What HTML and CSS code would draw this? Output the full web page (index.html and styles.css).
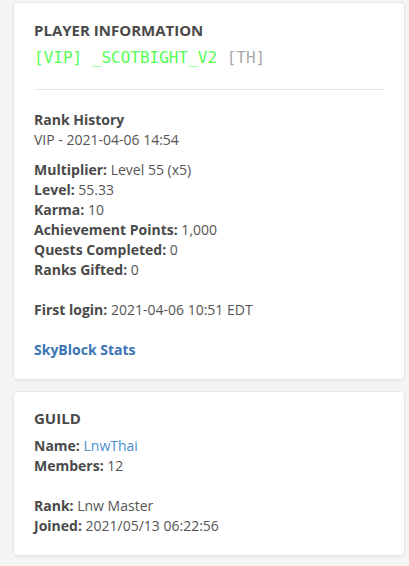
FILE: index.html
```html
<!DOCTYPE html>
<html>
<head>
<meta charset="utf-8">
<link rel="stylesheet" href="styles.css">
</head>
<body>
<div class="page">
  <section class="card card-player">
    <h2 class="card-title">PLAYER INFORMATION</h2>
    <div class="mc-name"><span class="mc-green">[VIP] _SCOTBIGHT_V2</span> <span class="mc-gray">[TH]</span></div>
    <hr class="divider">
    <div class="block">
      <div class="label">Rank History</div>
      <div>VIP - 2021-04-06 14:54</div>
    </div>
    <div class="block">
      <div><b>Multiplier:</b> Level 55 (x5)</div>
      <div><b>Level:</b> 55.33</div>
      <div><b>Karma:</b> 10</div>
      <div><b>Achievement Points:</b> 1,000</div>
      <div><b>Quests Completed:</b> 0</div>
      <div><b>Ranks Gifted:</b> 0</div>
    </div>
    <div class="block gap-lg">
      <div><b>First login:</b> 2021-04-06 10:51 EDT</div>
    </div>
    <div class="block gap-lg">
      <a class="link-strong" href="#">SkyBlock Stats</a>
    </div>
  </section>
  <section class="card card-guild">
    <h2 class="card-title">GUILD</h2>
    <div class="block first">
      <div><b>Name:</b> <a class="link" href="#">LnwThai</a></div>
      <div><b>Members:</b> 12</div>
    </div>
    <div class="block gap-lg">
      <div><b>Rank:</b> Lnw Master</div>
      <div><b>Joined:</b> 2021/05/13 06:22:56</div>
    </div>
  </section>
</div>
</body>
</html>
```
FILE: styles.css
```css
html, body {
  margin: 0;
  padding: 0;
  background: #f4f4f4;
}
body {
  font-family: "Open Sans", "Liberation Sans", sans-serif;
  font-size: 14px;
  line-height: 20px;
  color: #555;
}
.page {
  padding: 2px 4px 10px 13px;
  display: flex;
  flex-direction: column;
  gap: 11px;
}
.card {
  background: #fff;
  border: 1px solid #e6e6e6;
  border-radius: 4px;
  padding: 17px 20px 19px 20px;
  box-shadow: 0 1px 2px rgba(0,0,0,0.04);
}
.card-guild {
  padding-top: 16px;
}
.card-title {
  margin: 0;
  font-size: 15px;
  line-height: 20px;
  font-weight: 700;
  color: #4a4a4a;
}
.mc-name {
  font-family: "DejaVu Sans Mono", "Liberation Mono", monospace;
  font-size: 16px;
  line-height: 20px;
  margin-top: 8px;
}
.mc-green { color: #55ff55; }
.mc-gray { color: #aaaaaa; }
.divider {
  border: 0;
  border-top: 1px solid #e8e8e8;
  margin: 21px 0 20px 0;
}
.label { font-weight: 700; color: #4a4a4a; }
b { font-weight: 700; color: #4a4a4a; }
.block + .block { margin-top: 10px; }
.block.gap-lg { margin-top: 20px; }
.block.first { margin-top: 8px; }
.link-strong {
  font-weight: 700;
  color: #3a74b5;
  text-decoration: none;
}
.link {
  color: #4a8fd0;
  text-decoration: none;
}
```
